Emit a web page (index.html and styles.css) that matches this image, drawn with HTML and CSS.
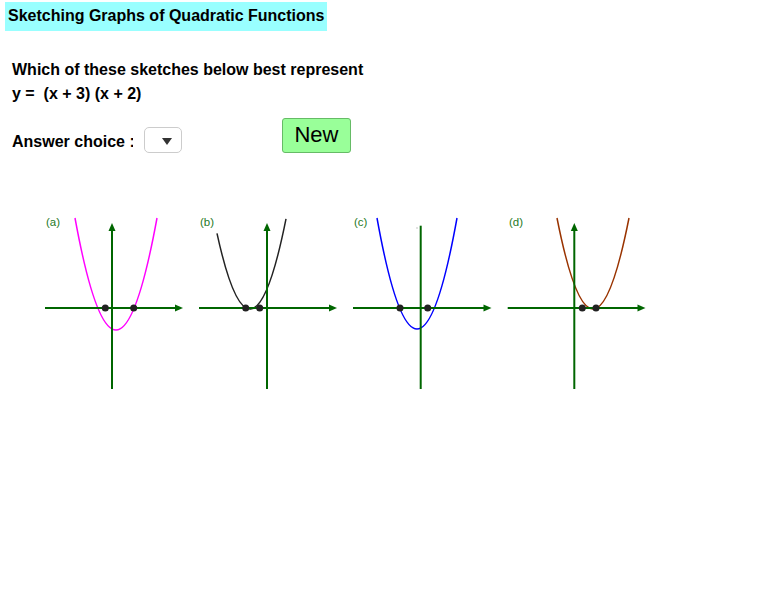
FILE: index.html
```html
<!DOCTYPE html>
<html>
<head>
<meta charset="utf-8">
<link rel="stylesheet" href="styles.css">
</head>
<body>
<div class="title">Sketching Graphs of Quadratic Functions</div>
<div class="question">
  <div>Which of these sketches below best represent</div>
  <div>y =&nbsp; (x + 3) (x + 2)</div>
</div>
<div class="answer-row">
  <div class="answer-label">Answer choice :</div>
  <div class="dropdown"><span class="caret"></span></div>
  <div class="new-btn">New</div>
</div>
<div class="graphs">
  <svg class="graph" width="154" height="185" viewBox="0 0 154 185">
    <text class="lbl" x="8" y="16">(a)</text>
    <path class="curve" stroke="#ff00ff" d="M37 8 Q78 232 119 8"/>
    <line class="axis" x1="7" y1="98" x2="138" y2="98"/>
    <polygon class="arrow" points="137,94.5 145,98 137,101.5"/>
    <line class="axis" x1="74" y1="179" x2="74" y2="20"/>
    <polygon class="arrow" points="70.5,21 74,13 77.5,21"/>
    <circle class="dot" cx="67.3" cy="98" r="3.5"/>
    <circle class="dot" cx="95.7" cy="98" r="3.5"/>
  </svg>
  <svg class="graph" width="154" height="185" viewBox="0 0 154 185">
    <text class="lbl" x="8" y="16">(b)</text>
    <path class="curve" stroke="#222222" d="M25 23.3 Q59.5 181.6 94 8.9"/>
    <line class="axis" x1="7" y1="98" x2="138" y2="98"/>
    <polygon class="arrow" points="137,94.5 145,98 137,101.5"/>
    <line class="axis" x1="75" y1="179" x2="75" y2="20"/>
    <polygon class="arrow" points="71.5,21 75,13 78.5,21"/>
    <circle class="dot" cx="53.7" cy="98" r="3.5"/>
    <circle class="dot" cx="67.7" cy="98" r="3.5"/>
  </svg>
  <svg class="graph" width="154" height="185" viewBox="0 0 154 185">
    <text class="lbl" x="8" y="16">(c)</text>
    <path class="curve" stroke="#0000ff" d="M31 8 Q71 230 111 8"/>
    <line class="axis" x1="7" y1="98" x2="138" y2="98"/>
    <polygon class="arrow" points="137.5,94.5 145.5,98 137.5,101.5"/>
    <line class="axis" x1="74.7" y1="179" x2="74.7" y2="15.7"/>
    <rect x="70.5" y="17.5" width="1" height="1" fill="#888"/>
    <circle class="dot" cx="54" cy="98" r="3.5"/>
    <circle class="dot" cx="81.7" cy="98" r="3.5"/>
  </svg>
  <svg class="graph" width="154" height="185" viewBox="0 0 154 185">
    <text class="lbl" x="9" y="16">(d)</text>
    <path class="curve" stroke="#993300" d="M57 8 Q93 190 129 8"/>
    <line class="axis" x1="7.7" y1="98" x2="138" y2="98"/>
    <polygon class="arrow" points="137.5,94.5 145.5,98 137.5,101.5"/>
    <line class="axis" x1="74.3" y1="179" x2="74.3" y2="20"/>
    <polygon class="arrow" points="70.8,21 74.3,13 77.8,21"/>
    <circle class="dot" cx="82.3" cy="98" r="3.5"/>
    <circle class="dot" cx="96" cy="98" r="3.5"/>
  </svg>
</div>
</body>
</html>
```

FILE: styles.css
```css
body {
  margin: 0;
  background: #ffffff;
  font-family: "Liberation Sans", Arial, sans-serif;
  color: #000;
}
.title {
  display: inline-block;
  margin: 2px 0 0 5px;
  padding: 0 3px;
  height: 29px;
  line-height: 28px;
  background: #99ffff;
  font-weight: bold;
  font-size: 16px;
  white-space: nowrap;
}
.question {
  margin: 27px 0 0 12px;
  font-weight: bold;
  font-size: 16px;
  line-height: 24px;
}
.answer-row {
  display: flex;
  align-items: flex-start;
  margin-top: 12px;
  height: 35px;
}
.answer-label {
  margin: 15px 0 0 12px;
  width: 121px;
  overflow: hidden;
  white-space: nowrap;
  font-weight: bold;
  font-size: 16px;
  line-height: 18px;
}
.dropdown {
  box-sizing: border-box;
  margin: 9px 0 0 11px;
  width: 38px;
  height: 26px;
  border: 1px solid #cccccc;
  border-radius: 5px;
  background: #fff;
  display: flex;
  align-items: center;
  padding: 2px 0 0 17px;
}
.caret {
  width: 0;
  height: 0;
  border-left: 5px solid transparent;
  border-right: 5px solid transparent;
  border-top: 7px solid #333333;
}
.new-btn {
  box-sizing: border-box;
  margin-left: 100px;
  width: 69px;
  height: 35px;
  background: #99ff99;
  border: 1px solid #66bb66;
  border-radius: 3px;
  font-size: 22px;
  line-height: 32px;
  text-align: center;
}
.graphs {
  display: flex;
  margin: 57px 0 0 38px;
}
.graph {
  display: block;
  overflow: visible;
}
.lbl {
  font-family: "Liberation Sans", Arial, sans-serif;
  font-size: 11.5px;
  fill: #1f7a1f;
}
.curve {
  fill: none;
  stroke-width: 1.5;
}
.axis {
  stroke: #006600;
  stroke-width: 2;
}
.arrow {
  fill: #006600;
}
.dot {
  fill: #222222;
}
```
